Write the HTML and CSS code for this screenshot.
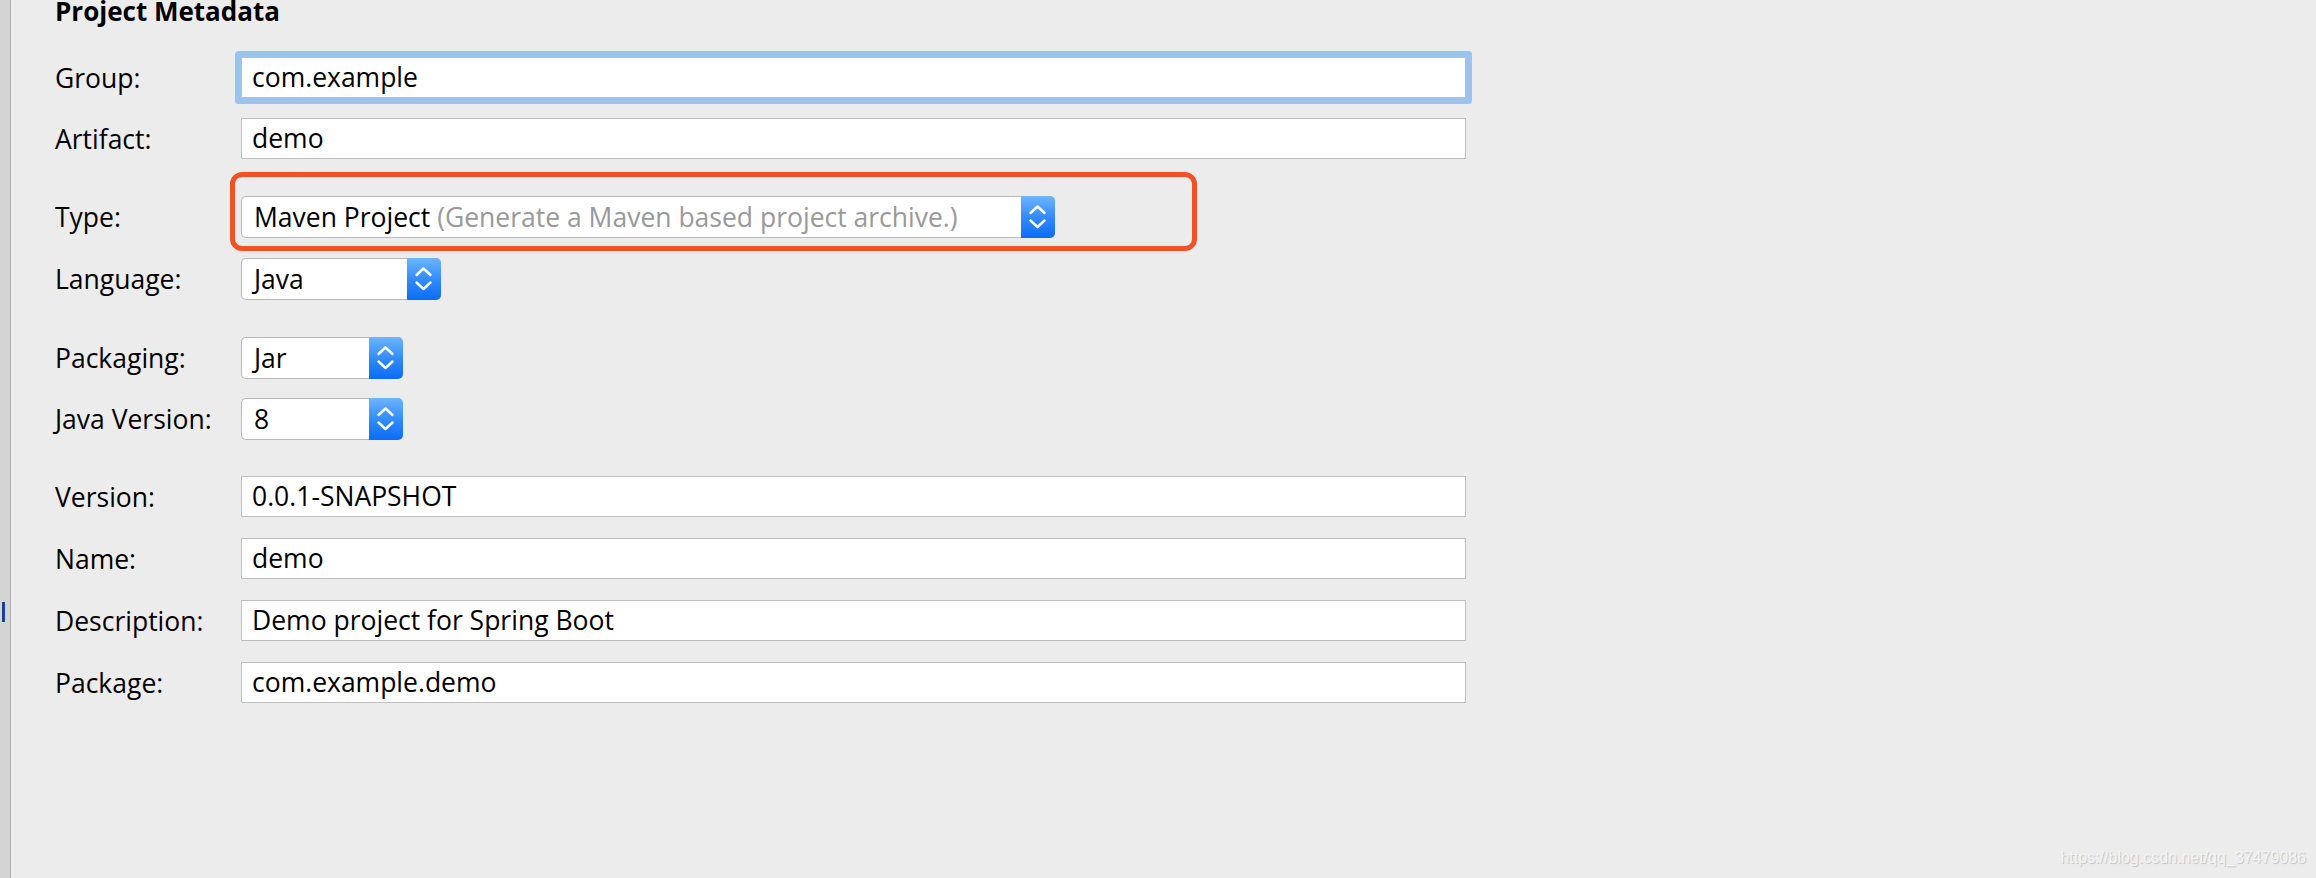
FILE: index.html
```html
<!DOCTYPE html>
<html lang="en">
<head>
<meta charset="utf-8">
<title>Project Metadata</title>
<link rel="stylesheet" href="styles.css">
</head>
<body>
<div class="window">
  <div class="sidebar"><span class="mark"></span></div>
  <main class="content">
    <h1 class="title">Project Metadata</h1>
    <div class="form">
      <div class="row r-group">
        <span class="label">Group:</span>
        <div class="field focused">com.example</div>
      </div>
      <div class="row r-20">
        <span class="label">Artifact:</span>
        <div class="field">demo</div>
      </div>
      <div class="row r-37">
        <span class="label">Type:</span>
        <div class="combo-cell">
          <div class="combo combo-type">
            <span class="combo-text">Maven Project <span class="hint">(Generate a Maven based project archive.)</span></span>
            <span class="combo-btn"><svg viewBox="0 0 34 42" width="34" height="42"><polyline points="9.5,17 16.5,10.5 23.5,17"/><polyline points="9.5,24.5 16.5,31 23.5,24.5"/></svg></span>
          </div>
          <div class="highlight"></div>
        </div>
      </div>
      <div class="row r-20">
        <span class="label">Language:</span>
        <div class="combo combo-lang">
          <span class="combo-text">Java</span>
          <span class="combo-btn"><svg viewBox="0 0 34 42" width="34" height="42"><polyline points="9.5,17 16.5,10.5 23.5,17"/><polyline points="9.5,24.5 16.5,31 23.5,24.5"/></svg></span>
        </div>
      </div>
      <div class="row r-37">
        <span class="label">Packaging:</span>
        <div class="combo combo-small">
          <span class="combo-text">Jar</span>
          <span class="combo-btn"><svg viewBox="0 0 34 42" width="34" height="42"><polyline points="9.5,17 16.5,10.5 23.5,17"/><polyline points="9.5,24.5 16.5,31 23.5,24.5"/></svg></span>
        </div>
      </div>
      <div class="row r-19">
        <span class="label">Java Version:</span>
        <div class="combo combo-small">
          <span class="combo-text">8</span>
          <span class="combo-btn"><svg viewBox="0 0 34 42" width="34" height="42"><polyline points="9.5,17 16.5,10.5 23.5,17"/><polyline points="9.5,24.5 16.5,31 23.5,24.5"/></svg></span>
        </div>
      </div>
      <div class="row r-36">
        <span class="label">Version:</span>
        <div class="field">0.0.1-SNAPSHOT</div>
      </div>
      <div class="row r-21">
        <span class="label">Name:</span>
        <div class="field">demo</div>
      </div>
      <div class="row r-21">
        <span class="label">Description:</span>
        <div class="field">Demo project for Spring Boot</div>
      </div>
      <div class="row r-21">
        <span class="label">Package:</span>
        <div class="field">com.example.demo</div>
      </div>
    </div>
  </main>
  <div class="watermark">https://blog.csdn.net/qq_37479086</div>
</div>
</body>
</html>
```
FILE: styles.css
```css
html, body {
  margin: 0;
  padding: 0;
  background: #ececec;
}

.window {
  position: relative;
  display: flex;
  width: 2316px;
  height: 878px;
  overflow: hidden;
  background: #ececec;
  font-family: "Open Sans", "Noto Sans", sans-serif;
  color: #000;
}

.sidebar {
  width: 11px;
  flex: none;
  background: #d4d4d4;
  border-right: 1px solid #adadad;
  padding-top: 602px;
  padding-left: 2px;
  box-sizing: border-box;
}

.mark {
  display: block;
  width: 3px;
  height: 20px;
  background: #1d3d9c;
}

.content {
  flex: 1;
  padding-left: 44px;
}

.title {
  margin: 0;
  font-size: 26px;
  font-weight: 700;
  line-height: 22px;
  color: #000;
}

.form {
  display: flex;
  flex-direction: column;
}

.row {
  display: grid;
  grid-template-columns: 186px auto;
  align-items: center;
  justify-items: start;
  font-size: 26.5px;
}

.r-group { margin-top: 35px; }
.r-19 { margin-top: 19px; }
.r-20 { margin-top: 20px; }
.r-21 { margin-top: 21px; }
.r-36 { margin-top: 36px; }
.r-37 { margin-top: 37px; }

.label {
  line-height: 30px;
  white-space: nowrap;
}

.field {
  box-sizing: border-box;
  width: 1225px;
  height: 41px;
  background: #fff;
  border: 1px solid #bfbfbf;
  padding-left: 10px;
  line-height: 39px;
  white-space: nowrap;
}

.field.focused {
  border-radius: 1px;
  box-shadow: 0 0 0 6px #9bc3f1;
}

.combo-cell {
  position: relative;
}

.combo {
  box-sizing: border-box;
  display: flex;
  height: 42px;
  background: #fff;
  border: 1px solid #b9b9b9;
  border-right: none;
  border-radius: 5px;
}

.combo-type { width: 814px; }
.combo-lang { width: 200px; }
.combo-small { width: 162px; }

.combo-text {
  flex: 1;
  padding-left: 12px;
  line-height: 40px;
  white-space: nowrap;
  overflow: hidden;
}

.hint {
  color: #999;
}

.combo-btn {
  flex: none;
  width: 34px;
  height: 42px;
  margin-top: -1px;
  margin-bottom: -1px;
  border-radius: 0 5px 5px 0;
  background: linear-gradient(#6db5fd, #2f88f9 55%, #0b6cf6);
}

.combo-btn svg {
  display: block;
}

.combo-btn polyline {
  fill: none;
  stroke: #fff;
  stroke-width: 2.4;
  stroke-linecap: round;
  stroke-linejoin: round;
}

.highlight {
  position: absolute;
  left: -11px;
  top: -24px;
  width: 967px;
  height: 79px;
  box-sizing: border-box;
  border: 5px solid #ef5227;
  border-radius: 12px;
  pointer-events: none;
}

.watermark {
  position: absolute;
  right: 10px;
  bottom: 10px;
  font-family: "Liberation Sans", Arial, sans-serif;
  font-size: 16px;
  line-height: 20px;
  color: #f4f4f4;
  text-shadow: 1px 1px 1px rgba(0, 0, 0, 0.18);
}
```
